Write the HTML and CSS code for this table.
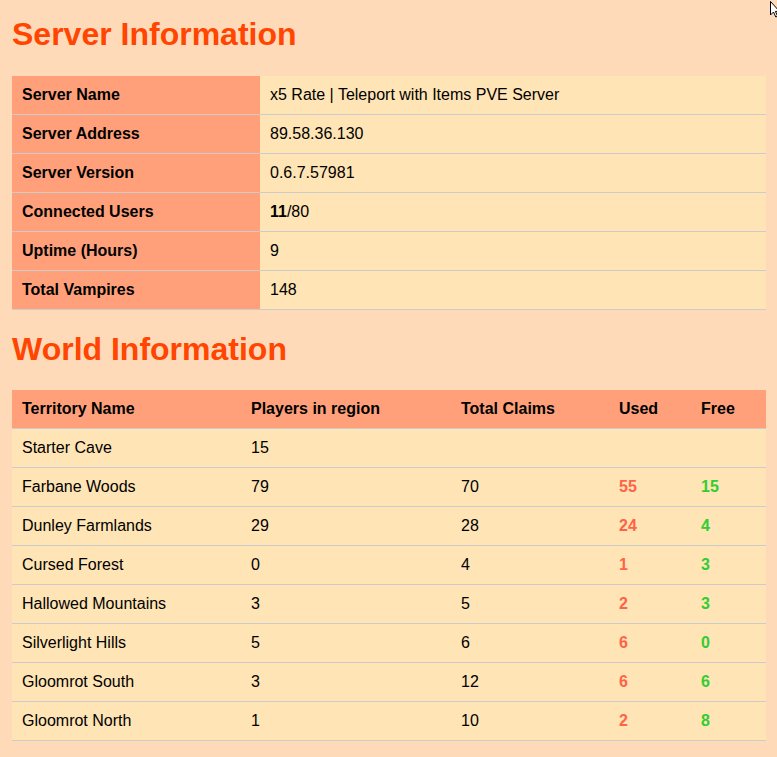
FILE: index.html
```html
<!DOCTYPE html>
<html>
<head>
<meta charset="utf-8">
<title>Server Information</title>
<link rel="stylesheet" href="styles.css">
</head>
<body>
<div class="page">
  <h1 class="title">Server Information</h1>
  <table class="info">
    <tr><th class="key">Server Name</th><td>x5 Rate | Teleport with Items PVE Server</td></tr>
    <tr><th class="key">Server Address</th><td>89.58.36.130</td></tr>
    <tr><th class="key">Server Version</th><td>0.6.7.57981</td></tr>
    <tr><th class="key">Connected Users</th><td><b>11</b>/80</td></tr>
    <tr><th class="key">Uptime (Hours)</th><td>9</td></tr>
    <tr><th class="key">Total Vampires</th><td>148</td></tr>
  </table>

  <h1 class="title">World Information</h1>
  <table class="info world">
    <tr>
      <th class="c1">Territory Name</th>
      <th class="c2">Players in region</th>
      <th class="c3">Total Claims</th>
      <th class="c4">Used</th>
      <th class="c5">Free</th>
    </tr>
    <tr><td>Starter Cave</td><td>15</td><td></td><td></td><td></td></tr>
    <tr><td>Farbane Woods</td><td>79</td><td>70</td><td class="used">55</td><td class="free">15</td></tr>
    <tr><td>Dunley Farmlands</td><td>29</td><td>28</td><td class="used">24</td><td class="free">4</td></tr>
    <tr><td>Cursed Forest</td><td>0</td><td>4</td><td class="used">1</td><td class="free">3</td></tr>
    <tr><td>Hallowed Mountains</td><td>3</td><td>5</td><td class="used">2</td><td class="free">3</td></tr>
    <tr><td>Silverlight Hills</td><td>5</td><td>6</td><td class="used">6</td><td class="free">0</td></tr>
    <tr><td>Gloomrot South</td><td>3</td><td>12</td><td class="used">6</td><td class="free">6</td></tr>
    <tr><td>Gloomrot North</td><td>1</td><td>10</td><td class="used">2</td><td class="free">8</td></tr>
  </table>
</div>
<svg class="cursor" width="10" height="17" viewBox="0 0 10 17"><path d="M0.5 0.5 L0.5 14 L3.5 11 L5.8 16 L7.6 15.2 L5.4 10.4 L9.5 10.4 Z" fill="#fff" stroke="#000" stroke-width="1"/></svg>
</body>
</html>
```
FILE: styles.css
```css
html, body {
  margin: 0;
  padding: 0;
  background: #FFDAB9;
}
body {
  font-family: "Liberation Sans", Arial, sans-serif;
  font-size: 16px;
  color: #000;
}
.page {
  padding: 16px 11px 16px 12px;
}
.title {
  font-size: 32px;
  font-weight: bold;
  color: #FF4500;
  margin: 21px 0 22px;
  line-height: 37px;
}
.title:first-child {
  margin-top: 0;
  margin-bottom: 23px;
}
.info {
  width: 100%;
  border-collapse: collapse;
  border-spacing: 0;
}
.info th,
.info td {
  padding: 10px;
  line-height: 18px;
  border-bottom: 1px solid #ccc;
  text-align: left;
  background: #FFE4B5;
  font-weight: normal;
}
.info th {
  background: #FFA07A;
  font-weight: bold;
}
.info .key {
  width: 228px;
}
.world .c1 { width: 209px; }
.world .c2 { width: 190px; }
.world .c3 { width: 138px; }
.world .c4 { width: 62px; }
.used {
  color: #FF6347;
  font-weight: bold !important;
}
.free {
  color: #32CD32;
  font-weight: bold !important;
}
.cursor {
  position: absolute;
  left: 770px;
  top: 1px;
}
```
